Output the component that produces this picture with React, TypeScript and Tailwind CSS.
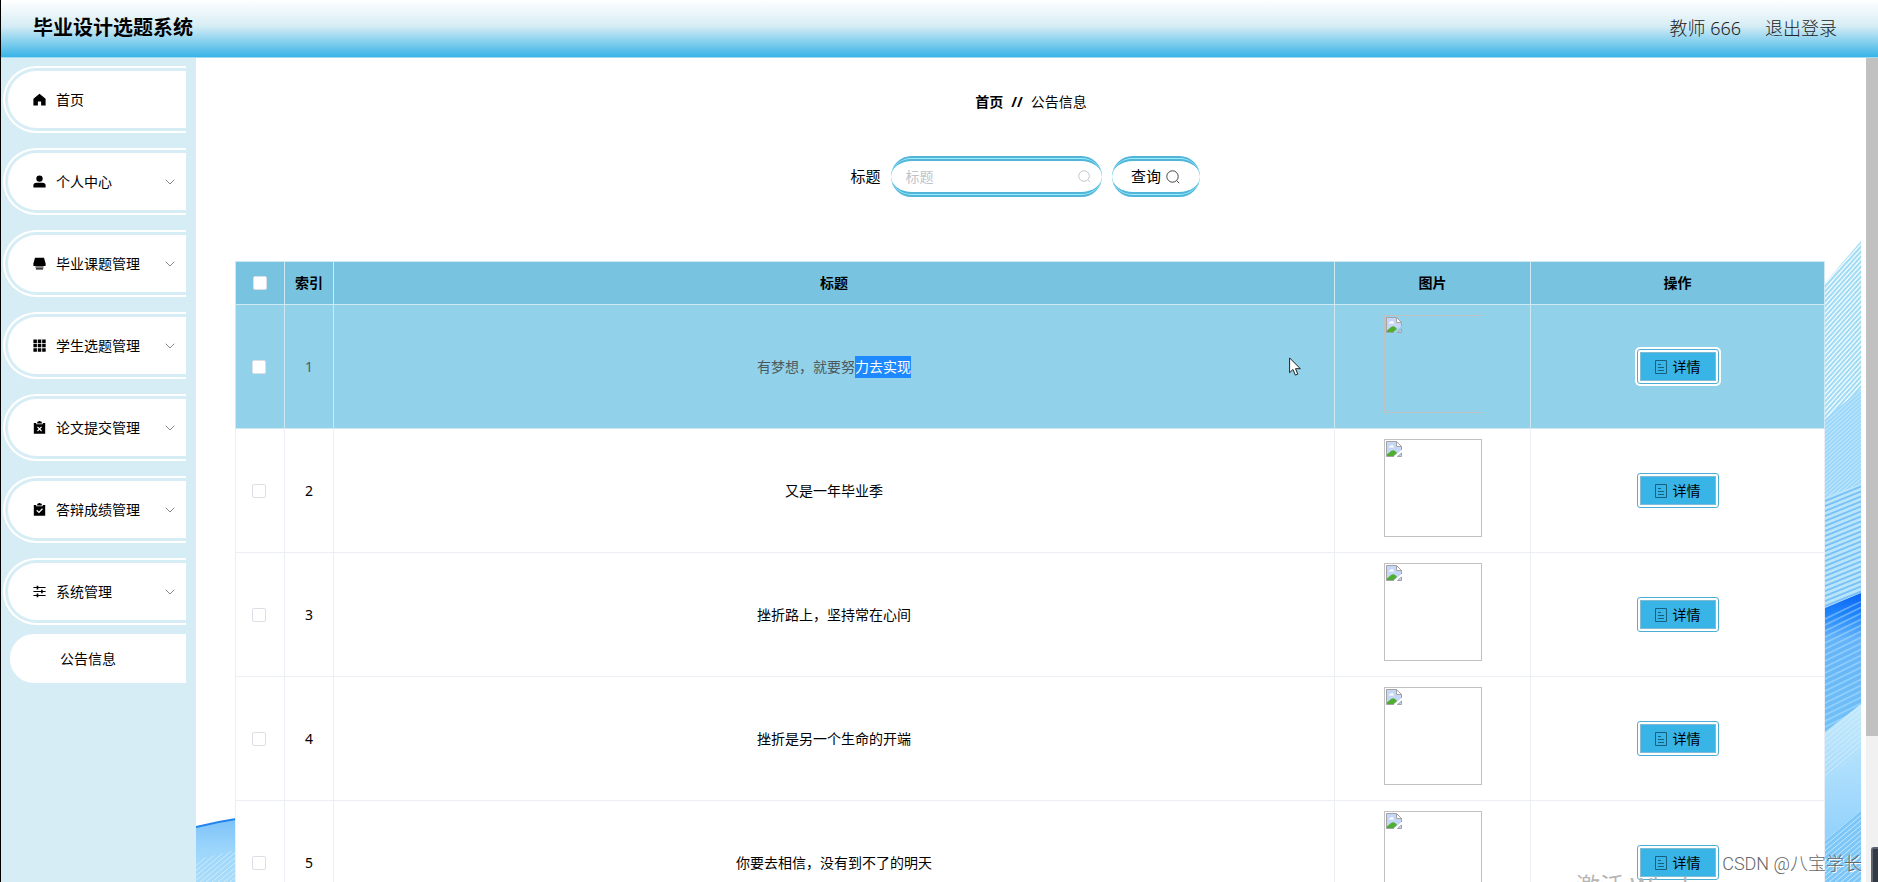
import type { ReactNode } from "react";

const ICONS: Record<string, ReactNode> = {
  home: <path d="M8 .8.500 7v8.500H6v-5h4v5h5.500V7z" />,
  user: (
    <>
      <circle cx="8" cy="4.400" r="3.900" />
      <path d="M.5 15.500v-2.700C.5 10.800 2 9.600 4 9.600h8c2 0 3.500 1.200 3.500 3.200v2.700z" />
    </>
  ),
  project: (
    <>
      <path d="M2.500.800h11L15.500 8v3H.5V8z" />
      <path d="M3 11.600h10v1.200H3zM3.500 13.800h9v1.500h-9z" />
    </>
  ),
  grid: (
    <path d="M.5.500h4.300v4.300H.5zM5.900.500h4.300v4.300H5.900zM11.300.500h4.300v4.300h-4.300zM.5 5.900h4.300v4.300H.5zM5.900 5.900h4.300v4.300H5.900zM11.300 5.900h4.300v4.300h-4.300zM.5 11.300h4.300v4.300H.5zM5.900 11.300h4.300v4.300H5.900zM11.300 11.300h4.300v4.300h-4.300z" />
  ),
  reject: (
    <>
      <path d="M1 2.600h3V4h8V2.600h3v13.200H1z" />
      <path d="M5.200 1h1.600V0h2.400v1h1.600v2H5.200z" />
      <path d="m5.500 7.300 5 5m0-5-5 5" stroke="#fff" strokeWidth="1.500" />
    </>
  ),
  check: (
    <>
      <path d="M1 2.600h3V4h8V2.600h3v13.200H1z" />
      <path d="M5.200 1h1.600V0h2.400v1h1.600v2H5.200z" />
      <path d="m4.600 9 2.700 2.600 4.300-4.500" stroke="#fff" strokeWidth="1.500" fill="none" />
    </>
  ),
  sliders: (
    <>
      <path d="M.5 2.500h15v1.200H.5zM.5 7.400h15v1.200H.5zM.5 12.300h15v1.200H.5z" />
      <path d="M4.500.8h2v4.600h-2zM10 5.700h2v4.600h-2zM4.500 10.600h2v4.600h-2z" />
    </>
  ),
};

const MENU = [
  { label: "首页", icon: "home", open: false },
  { label: "个人中心", icon: "user", open: true },
  { label: "毕业课题管理", icon: "project", open: true },
  { label: "学生选题管理", icon: "grid", open: true },
  { label: "论文提交管理", icon: "reject", open: true },
  { label: "答辩成绩管理", icon: "check", open: true },
  { label: "系统管理", icon: "sliders", open: true },
];

const ROWS = [
  { id: 1, title: "有梦想，就要努", selected: "力去实现" },
  { id: 2, title: "又是一年毕业季" },
  { id: 3, title: "挫折路上，坚持常在心间" },
  { id: 4, title: "挫折是另一个生命的开端" },
  { id: 5, title: "你要去相信，没有到不了的明天" },
];

const PILL =
  "h-[41px] rounded-[21px] border-y-[5px] border-double border-[#52b4d9] [background:linear-gradient(#fff,#fff)_padding-box,linear-gradient(#9beefb,#9beefb)_border-box]";

const CHECKBOX =
  "block size-[14px] appearance-none rounded-[2px] border border-[#dcdfe6] bg-white checked:bg-[#409eff]";

function SearchIcon({ className }: { className: string }) {
  return (
    <svg viewBox="0 0 14 14" className={className} fill="none" stroke="currentColor" aria-hidden>
      <circle cx="6.500" cy="6.500" r="5.700" />
      <path d="m10.600 10.600 2.600 2.600" />
    </svg>
  );
}

function BrokenImage() {
  return (
    <div role="img" aria-label="图片" className="mx-auto size-[98px] border border-[#c0c0c0] p-px">
      <svg viewBox="0 0 16 16" className="size-4" aria-hidden>
        <path d="M.5.500h10l5 5V9L8 15.500H.5z" fill="#c6d6f7" />
        <path d="M11.500 15.500 15.500 12v3.500z" fill="#c6d6f7" stroke="#a3a3a3" />
        <path d="M1 15v-1.500L5 10c1.200-1 3-1 4.200 0l1.800 2-3.500 3z" fill="#4fae2f" />
        <path d="M3 6.500C2.800 5.200 4 4.600 4.600 5 5 3.600 7 3.700 7.200 5.200c1 0 1.100 1.300.3 1.300z" fill="#fff" />
        <path d="M8 15.500H.5V.500h10l5 5V9" fill="none" stroke="#a3a3a3" />
        <path d="M10.500.500v5h5z" fill="#fff" stroke="#a3a3a3" />
      </svg>
    </div>
  );
}

function DetailButton({ active }: { active: boolean }) {
  return (
    <button
      type="button"
      className={`rounded-[3px] border border-[#4cafd3] bg-white p-[2px] align-middle ${
        active ? "shadow-[0_0_0_2px_#fff]" : ""
      }`}
    >
      <span className="flex h-[29px] w-[76px] items-center justify-center gap-[6px] border border-[#7fbcd4] bg-[#38b4e7] text-sm text-black">
        <svg viewBox="0 0 12 14" className="h-[14px] w-3" fill="none" stroke="#17607f" aria-hidden>
          <path d="M.5.500h11v13H.5zM3 4.500h3M3 7.500h6M3 10.500h6" />
        </svg>
        详情
      </span>
    </button>
  );
}

// Decorative ribbons that show through on both sides of the table
function Ribbons() {
  return (
    <>
      <svg
        className="pointer-events-none absolute right-[5px] top-[182px] h-[642px] w-9"
        viewBox="0 240 36 642"
        preserveAspectRatio="none"
        aria-hidden
      >
        <defs>
          <pattern id="thin" width="36" height="5" patternUnits="userSpaceOnUse" patternTransform="skewY(-48)">
            <rect width="36" height="5" fill="#eef9fd" />
            <rect width="36" height="3" fill="#a3dcf5" />
          </pattern>
          <pattern id="mid" width="36" height="4" patternUnits="userSpaceOnUse" patternTransform="skewY(-42)">
            <rect width="36" height="4" fill="#b7e3fb" />
            <rect width="36" height="2" fill="#9ad5fa" />
          </pattern>
          <pattern id="wave" width="36" height="5" patternUnits="userSpaceOnUse" patternTransform="skewY(-22)">
            <rect width="36" height="5" fill="#b8e5fa" />
            <rect width="36" height="2" fill="#78c0f6" />
          </pattern>
          <pattern id="lines" width="36" height="6" patternUnits="userSpaceOnUse" patternTransform="skewY(-26)">
            <rect width="36" height="2" fill="#c8ebff" fillOpacity=".4" />
          </pattern>
          <pattern id="tail" width="36" height="5" patternUnits="userSpaceOnUse" patternTransform="skewY(-40)">
            <rect width="36" height="1" fill="#d6f0fd" fillOpacity=".8" />
          </pattern>
          <linearGradient id="deep" x2="0" y2="1">
            <stop offset="0" stopColor="#0b63f5" />
            <stop offset=".14" stopColor="#1f86fb" />
            <stop offset=".3" stopColor="#63b3f9" />
            <stop offset="1" stopColor="#74c3f7" />
          </linearGradient>
          <linearGradient id="pale" x2="0" y2="1">
            <stop offset="0" stopColor="#c4e9fa" />
            <stop offset=".5" stopColor="#a4dafd" />
            <stop offset="1" stopColor="#83cafb" />
          </linearGradient>
        </defs>
        <path d="M0 283 36 241V400L0 430z" fill="url(#thin)" />
        <path d="M0 419 36 389V495L0 505z" fill="url(#mid)" />
        <path d="M0 497 36 484V600L0 612z" fill="url(#wave)" />
        <path d="M0 608 36 593V720L0 745z" fill="url(#deep)" />
        <path d="M0 616 36 601V720L0 745z" fill="url(#lines)" />
        <path d="M0 732 36 704V882H0z" fill="url(#pale)" />
        <path d="M0 840 36 810V882H0z" fill="#7cc6f8" />
        <path d="M0 732 36 704V750L0 780zM0 840 36 810V882H0z" fill="url(#tail)" />
      </svg>
      <svg
        className="pointer-events-none absolute left-0 top-[760px] h-16 w-10"
        viewBox="0 818 40 64"
        preserveAspectRatio="none"
        aria-hidden
      >
        <defs>
          <linearGradient id="hill" x2="0" y2="1">
            <stop offset="0" stopColor="#7cc2f8" />
            <stop offset=".5" stopColor="#9dd6fc" />
            <stop offset="1" stopColor="#a9dcf8" />
          </linearGradient>
        </defs>
        <path d="M0 827Q20 822 40 819V882H0z" fill="url(#hill)" />
        <path d="M0 860 40 850V882H0z" fill="url(#tail)" />
        <path d="M0 827Q20 822 40 819" fill="none" stroke="#2583ee" strokeWidth="2" />
      </svg>
    </>
  );
}

export default function App() {
  return (
    <div className="relative flex h-screen flex-col overflow-hidden border-l border-black bg-white font-['Noto_Sans','Noto_Sans_CJK_SC',sans-serif] text-sm text-black">
      <header className="flex h-[58px] shrink-0 items-center justify-between border-b border-[#9fdcf2] bg-[linear-gradient(#fff,#d7edf5_45%,#38b4e7)] pb-[2px] pl-8 pr-[41px]">
        <h1 className="text-xl font-bold">毕业设计选题系统</h1>
        <nav className="flex gap-6 text-lg font-light text-[#222]">
          <span>教师 666</span>
          <a href="#logout">退出登录</a>
        </nav>
      </header>

      <div className="flex min-h-0 flex-1">
        <aside className="w-[195px] shrink-0 overflow-hidden bg-[#d7edf5] pl-[2px] pr-[10px] pt-2">
          <ul className="flex flex-col gap-[15px]">
            {MENU.map((item) => (
              <li key={item.label} className="rounded-l-[34px] border-2 border-r-0 border-white py-[3px] pl-[3px]">
                <a href="#menu" className="flex h-[57px] items-center rounded-l-[29px] bg-white pl-[25px] pr-[11px]">
                  <svg viewBox="0 0 16 16" className="mr-[10px] size-[13px]" fill="currentColor" aria-hidden>
                    {ICONS[item.icon]}
                  </svg>
                  <span className="flex-1">{item.label}</span>
                  {item.open && (
                    <svg viewBox="0 0 10 6" className="h-[6px] w-[10px]" fill="none" stroke="#888" aria-hidden>
                      <path d="m.7.700 4.300 4.300L9.300.700" />
                    </svg>
                  )}
                </a>
              </li>
            ))}
          </ul>
          <a href="#notice" className="ml-[7px] mt-[9px] flex h-[49px] items-center rounded-l-[24px] bg-white pl-[50px]">
            公告信息
          </a>
        </aside>

        <main className="relative min-w-0 flex-1 overflow-hidden">
          <Ribbons />
          <nav className="mt-[34px] flex h-5 items-center justify-center gap-2">
            <a href="#home" className="font-bold">首页</a>
            <span className="font-bold">//</span>
            <span>公告信息</span>
          </nav>

          <form className="mt-[44px] flex items-center justify-center pr-3">
            <label htmlFor="title" className="mr-[10px] text-[15px]">标题</label>
            <div className={`mr-[10px] flex w-[211px] items-center pl-[15px] pr-[11px] ${PILL}`}>
              <input
                id="title"
                placeholder="标题"
                className="min-w-0 flex-1 bg-transparent outline-none placeholder:text-[#c0c4cc]"
              />
              <SearchIcon className="size-[13px] text-[#c0c4cc]" />
            </div>
            <button type="button" className={`flex w-[88px] items-center justify-center gap-[5px] text-[15px] ${PILL}`}>
              查询
              <SearchIcon className="size-[14px] text-[#444]" />
            </button>
          </form>

          <div className="relative mt-16 pl-[39px] pr-[41px]">
            <table className="w-full table-fixed border-collapse bg-white text-center">
              <colgroup>
                <col className="w-[49px]" />
                <col className="w-[49px]" />
                <col />
                <col className="w-[196px]" />
                <col className="w-[294px]" />
              </colgroup>
              <thead>
                <tr className="h-[43px] bg-[#77c3e0] *:border *:border-[#cfe9f3] *:font-bold">
                  <th>
                    <input type="checkbox" aria-label="全选" className={`mx-auto ${CHECKBOX}`} />
                  </th>
                  <th>索引</th>
                  <th>标题</th>
                  <th>图片</th>
                  <th>操作</th>
                </tr>
              </thead>
              <tbody>
                {ROWS.map((row) => (
                  <tr
                    key={row.id}
                    className={
                      row.selected
                        ? "h-[124px] bg-[#91d1ea] text-[#4c5a60] *:border *:border-[#cfe9f3]"
                        : "h-[124px] *:border *:border-[#ebeef2]"
                    }
                  >
                    <td>
                      <input type="checkbox" aria-label={`选择 ${row.id}`} className={`ml-4 ${CHECKBOX}`} />
                    </td>
                    <td>{row.id}</td>
                    <td className="relative">
                      {row.title}
                      {row.selected && (
                        <>
                          <span className="inline-block bg-[#1e88ff] leading-[22px] text-white">{row.selected}</span>
                          <svg viewBox="0 0 12 19" className="absolute right-[33px] top-[52px] h-[19px] w-3" aria-hidden>
                            <path
                              d="M.6.900v14.800l3.400-3.200 2.300 5.600 2.500-1-2.300-5.400h4.800z"
                              fill="#fff"
                              stroke="#222"
                            />
                          </svg>
                        </>
                      )}
                    </td>
                    <td className="pb-[15px] pt-[10px]">
                      <BrokenImage />
                    </td>
                    <td>
                      <DetailButton active={Boolean(row.selected)} />
                    </td>
                  </tr>
                ))}
              </tbody>
            </table>
          </div>
        </main>

        <div className="w-3 shrink-0 bg-[#f1f1f1]">
          <div className="h-[678px] bg-[#c1c1c1]" />
        </div>
      </div>

      <div className="absolute bottom-0 right-0 h-[35px] w-[7px] rounded-tl-[3px] border-l-2 border-t-2 border-[#5b6470] bg-[#343a44]" />
      <div className="absolute -bottom-5 right-[134px] w-[168px] whitespace-nowrap text-2xl leading-8 text-[#b5b5b5]">激活 Windows</div>
      <div className="absolute bottom-1 right-4 font-['Roboto','Noto_Sans_CJK_SC',sans-serif] text-lg font-light text-[#666] [text-shadow:1px_1px_0_#fff]">
        CSDN @八宝学长
      </div>
    </div>
  );
}
